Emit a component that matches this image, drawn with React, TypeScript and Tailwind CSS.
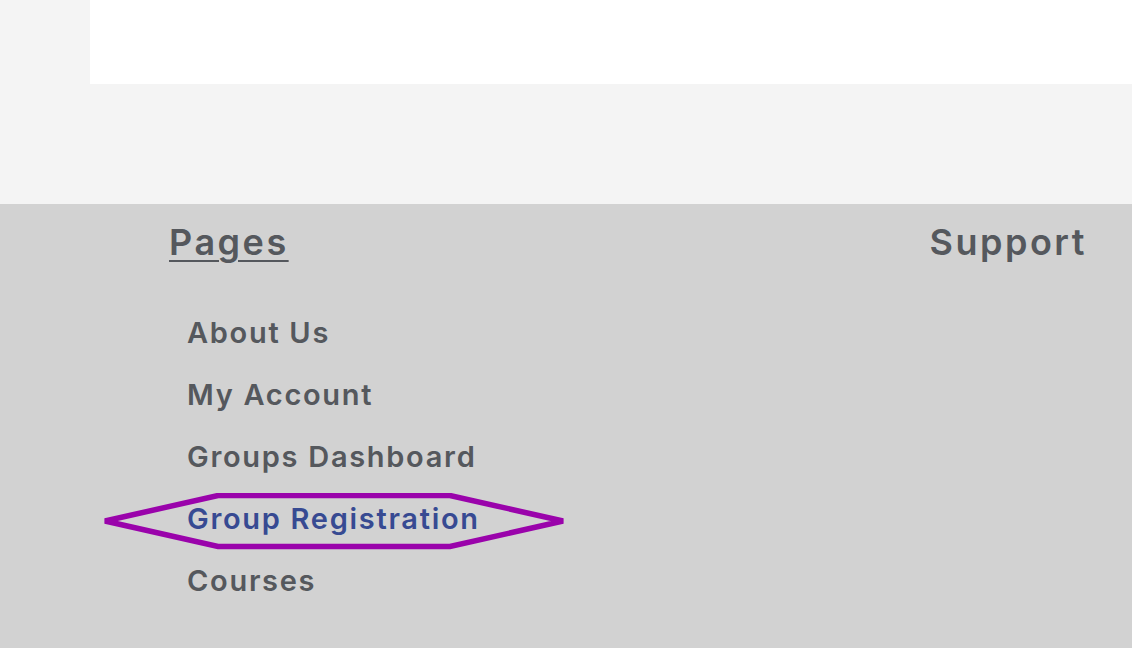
import React from "react";

const pages = [
  { label: "About Us", href: "#about" },
  { label: "My Account", href: "#account" },
  { label: "Groups Dashboard", href: "#groups" },
  { label: "Group Registration", href: "#register", active: true },
  { label: "Courses", href: "#courses" },
];

const font = { fontFamily: "Inter, 'Open Sans', sans-serif" };

// hexagon callout drawn around the highlighted link
function Callout() {
  return (
    <svg
      className="pointer-events-none absolute left-[-84px] top-[-28px]"
      width="464"
      height="60"
      viewBox="0 0 464 60"
    >
      <polygon
        points="2,28 115,2.5 347,2.5 460,28 347,53.5 115,53.5"
        fill="none"
        stroke="#9a03ab"
        strokeWidth="5.5"
        strokeLinejoin="miter"
      />
    </svg>
  );
}

export default function App() {
  return (
    <div className="flex min-h-[648px] w-full flex-col bg-[#f4f4f4]" style={font}>
      <div className="h-[204px] pl-[90px]">
        <div className="h-[84px] bg-white" />
      </div>

      <footer className="flex flex-1 justify-between bg-[#d2d2d2] pl-[169px] pr-[45px] pt-[13px]">
        <div>
          <a
            href="#pages"
            className="text-[36px] font-semibold leading-[50px] tracking-[2.5px] text-[#55585d] underline decoration-2 underline-offset-[5px]"
          >
            Pages
          </a>
          <ul className="mt-[35px] flex flex-col pl-[18px]">
            {pages.map((p) => (
              <li key={p.label} className="relative h-[62px]">
                <a
                  href={p.href}
                  className={
                    "text-[29px] font-semibold leading-[62px] tracking-[1.7px] " +
                    (p.active ? "text-[#374a92]" : "text-[#55585d]")
                  }
                >
                  {p.label}
                </a>
                {p.active && (
                  <div className="absolute left-0 top-[33px]">
                    <Callout />
                  </div>
                )}
              </li>
            ))}
          </ul>
        </div>
        <h3 className="text-[36px] font-semibold leading-[50px] tracking-[2.5px] text-[#55585d]">
          Support
        </h3>
      </footer>
    </div>
  );
}
